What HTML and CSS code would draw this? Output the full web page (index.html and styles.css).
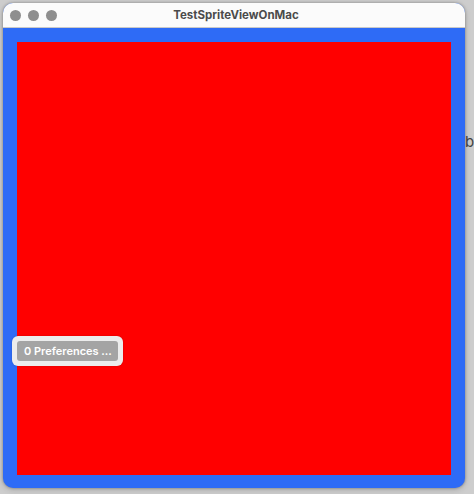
FILE: index.html
```html
<!DOCTYPE html>
<html>
<head>
<meta charset="utf-8">
<link rel="stylesheet" href="styles.css">
</head>
<body>
<div class="desk">
  <span class="behind-b">b</span>
  <div class="window">
    <div class="titlebar">
      <div class="lights">
        <span class="light"></span>
        <span class="light"></span>
        <span class="light"></span>
      </div>
      <div class="title">TestSpriteViewOnMac</div>
    </div>
    <div class="content">
      <div class="scene"></div>
    </div>
  </div>
  <div class="prefs"><span class="prefs-inner">0 Preferences ...</span></div>
</div>
</body>
</html>
```
FILE: styles.css
```css
html, body {
  margin: 0;
  padding: 0;
}
body {
  width: 474px;
  height: 494px;
  overflow: hidden;
  background: #cdcdcd;
  font-family: "Inter", "Liberation Sans", Arial, sans-serif;
}
.desk {
  position: relative;
  width: 474px;
  height: 494px;
  padding: 3px 0 0 3px;
  box-sizing: border-box;
}
.behind-b {
  position: absolute;
  left: 465px;
  top: 132px;
  font-size: 15px;
  color: #444;
}
.window {
  position: relative;
  width: 462px;
  height: 485px;
  border-radius: 10px;
  overflow: hidden;
  background: #2e6bf6;
  box-shadow: 0 0 3px rgba(0,0,0,0.35), 0 2px 6px rgba(0,0,0,0.15);
  display: flex;
  flex-direction: column;
}
.titlebar {
  height: 24px;
  background: #fbfbfb;
  border-bottom: 1px solid #c9c9c9;
  display: flex;
  align-items: center;
  position: relative;
  flex-shrink: 0;
}
.lights {
  display: flex;
  gap: 7px;
  padding-left: 7px;
}
.light {
  width: 11px;
  height: 11px;
  border-radius: 50%;
  background: #8e8e8e;
}
.title {
  position: absolute;
  left: 0;
  right: 0;
  text-align: center;
  font-size: 11.5px;
  font-weight: 700;
  color: #4b4b4b;
  top: 5px;
  padding-left: 4px;
}
.content {
  flex: 1;
  padding: 14px 14px 13px 14px;
  display: flex;
}
.scene {
  flex: 1;
  background: #ff0000;
}
.prefs {
  position: absolute;
  left: 12px;
  top: 336px;
  width: 111px;
  height: 30px;
  box-sizing: border-box;
  background: #ececec;
  border-radius: 6px;
  padding: 5px;
  display: flex;
  box-shadow: 0 0 2px rgba(0,0,0,0.2);
}
.prefs-inner {
  flex: 1;
  background: #a4a4a4;
  border-radius: 3px;
  color: #fff;
  font-size: 11px;
  font-weight: 600;
  display: flex;
  align-items: center;
  padding-left: 7px;
  white-space: nowrap;
}
```
